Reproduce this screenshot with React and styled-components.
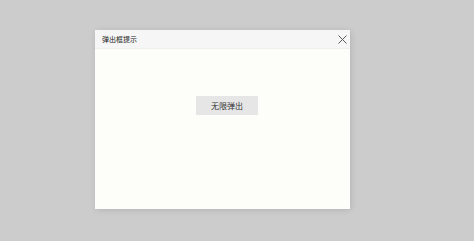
import React from "react";
import styled, { createGlobalStyle } from "styled-components";

const Global = createGlobalStyle`
  html, body { margin: 0; padding: 0; background: #cccccc; }
  body { font-family: "Noto Sans CJK SC", "Noto Sans", sans-serif; }
`;

const Page = styled.div`
  width: 474px;
  height: 241px;
  box-sizing: border-box;
  padding: 30px 0 0 95px;
  background: #cccccc;
`;

const Dialog = styled.div`
  width: 255px;
  height: 179px;
  display: flex;
  flex-direction: column;
  background: #fdfdf9;
  box-shadow: 1px 1px 6px rgba(0, 0, 0, 0.12);
`;

const Header = styled.div`
  height: 19px;
  flex: none;
  display: flex;
  align-items: center;
  justify-content: space-between;
  padding: 0 3px 0 7px;
  background: #f6f6f6;
  border-bottom: 1px solid #efefef;
  box-sizing: border-box;
`;

const Title = styled.span`
  font-size: 7px;
  color: #222;
  line-height: 1;
`;

const Close = styled.button`
  border: none;
  background: none;
  padding: 0;
  width: 9px;
  height: 9px;
  display: flex;
  align-items: center;
  justify-content: center;
  cursor: pointer;
`;

const Body = styled.div`
  flex: 1;
  padding: 41px 0 0 101px;
`;

const Action = styled.button`
  width: 62px;
  height: 19px;
  border: none;
  background: #e6e6e6;
  color: #333;
  font-family: inherit;
  font-size: 8px;
  padding: 0;
  cursor: pointer;
`;

export default function App() {
  return (
    <>
      <Global />
      <Page>
        <Dialog>
          <Header>
            <Title>弹出框提示</Title>
            <Close aria-label="close">
              <svg width="9" height="9" viewBox="0 0 9 9">
                <path d="M0.5 0.5 L8.5 8.5 M8.5 0.5 L0.5 8.5" stroke="#5a5a5a" strokeWidth="1" fill="none" />
              </svg>
            </Close>
          </Header>
          <Body>
            <Action>无限弹出</Action>
          </Body>
        </Dialog>
      </Page>
    </>
  );
}
